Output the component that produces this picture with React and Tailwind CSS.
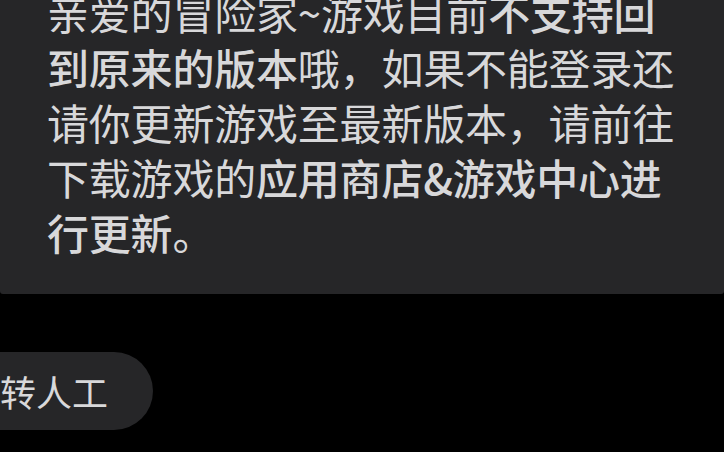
export default function App() {
  const font = { fontFamily: '"Noto Sans CJK SC", "Noto Sans", sans-serif' };
  return (
    <div className="w-[724px] h-[452px] bg-black overflow-hidden" style={font}>
      <div className="bg-[#262628] rounded-b-[3px] pl-[47px] pr-[40px] pb-[35px]">
        <p className="mt-[-16px] text-[42px] leading-[55px] text-[#d8d8da] tracking-[-0.2px]">
          亲爱的冒险家~游戏目前<b className="font-medium">不支持回到原来的版本</b>哦，如果不能登录还请你更新游戏至最新版本，请前往下载游戏的<b className="font-medium">应用商店&amp;游戏中心进行更新</b>。
        </p>
      </div>
      <div className="mt-[58px] flex">
        <button className="ml-[-46px] h-[78px] rounded-full bg-[#262628] pl-[46px] pr-[45px] text-[36px] text-[#d8d8da] flex items-center">
          转人工
        </button>
      </div>
    </div>
  );
}
